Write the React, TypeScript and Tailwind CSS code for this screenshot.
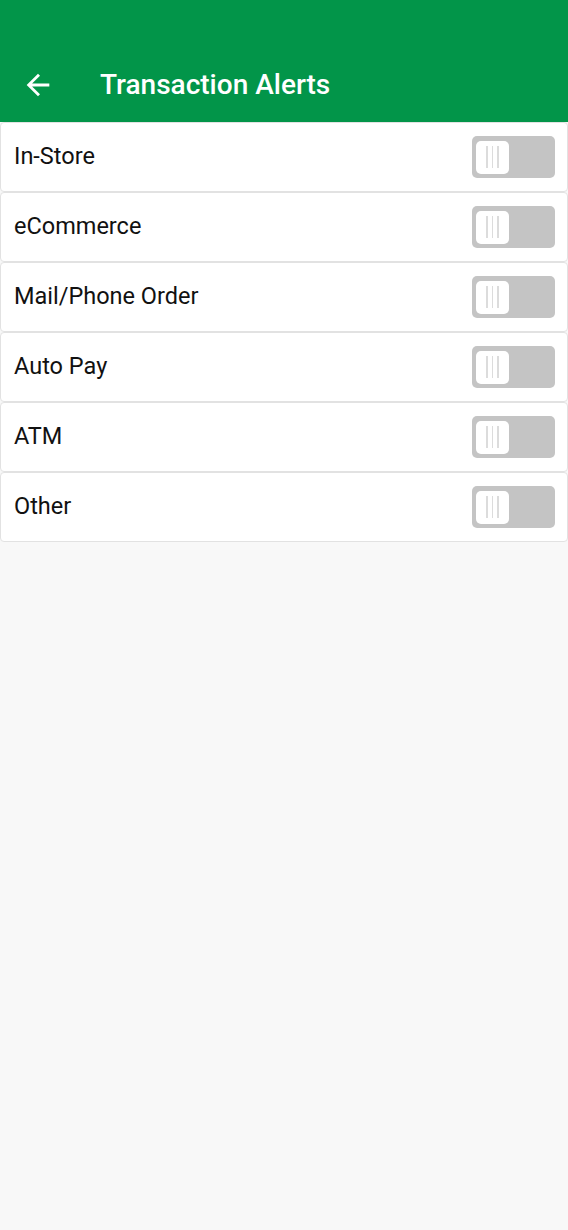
const items = ["In-Store", "eCommerce", "Mail/Phone Order", "Auto Pay", "ATM", "Other"];

const Toggle = () => (
  <div className="flex h-[42px] w-[83px] items-center rounded-[5px] bg-[#c4c4c4] px-[4px]">
    <div className="flex h-[33px] w-[33px] items-center justify-center gap-[4px] rounded-[5px] bg-white">
      <span className="h-[22px] w-[1.5px] bg-[#dcdcdc]" />
      <span className="h-[22px] w-[1.5px] bg-[#dcdcdc]" />
      <span className="h-[22px] w-[1.5px] bg-[#dcdcdc]" />
    </div>
  </div>
);

export default function App() {
  return (
    <div className="min-h-[1230px] bg-[#f8f8f8] font-['Roboto',sans-serif]">
      <header className="flex h-[122px] items-end bg-[#029549] pb-[20px]">
        <button className="ml-[21px] flex h-[34px] w-[34px] items-center justify-center text-white">
          <svg viewBox="0 0 24 24" width="34" height="34" fill="currentColor">
            <path d="M20 11H7.83l5.59-5.59L12 4l-8 8 8 8 1.41-1.41L7.83 13H20v-2z" />
          </svg>
        </button>
        <h1 className="ml-[45px] text-[28px] leading-[34px] font-medium text-white">Transaction Alerts</h1>
      </header>
      <ul>
        {items.map((label) => (
          <li
            key={label}
            className="flex h-[70px] items-center justify-between rounded-[4px] border border-[#e2e2e2] bg-white pl-[13px] pr-[12px]"
          >
            <span className="text-[23.5px] text-[#111]">{label}</span>
            <Toggle />
          </li>
        ))}
      </ul>
    </div>
  );
}
